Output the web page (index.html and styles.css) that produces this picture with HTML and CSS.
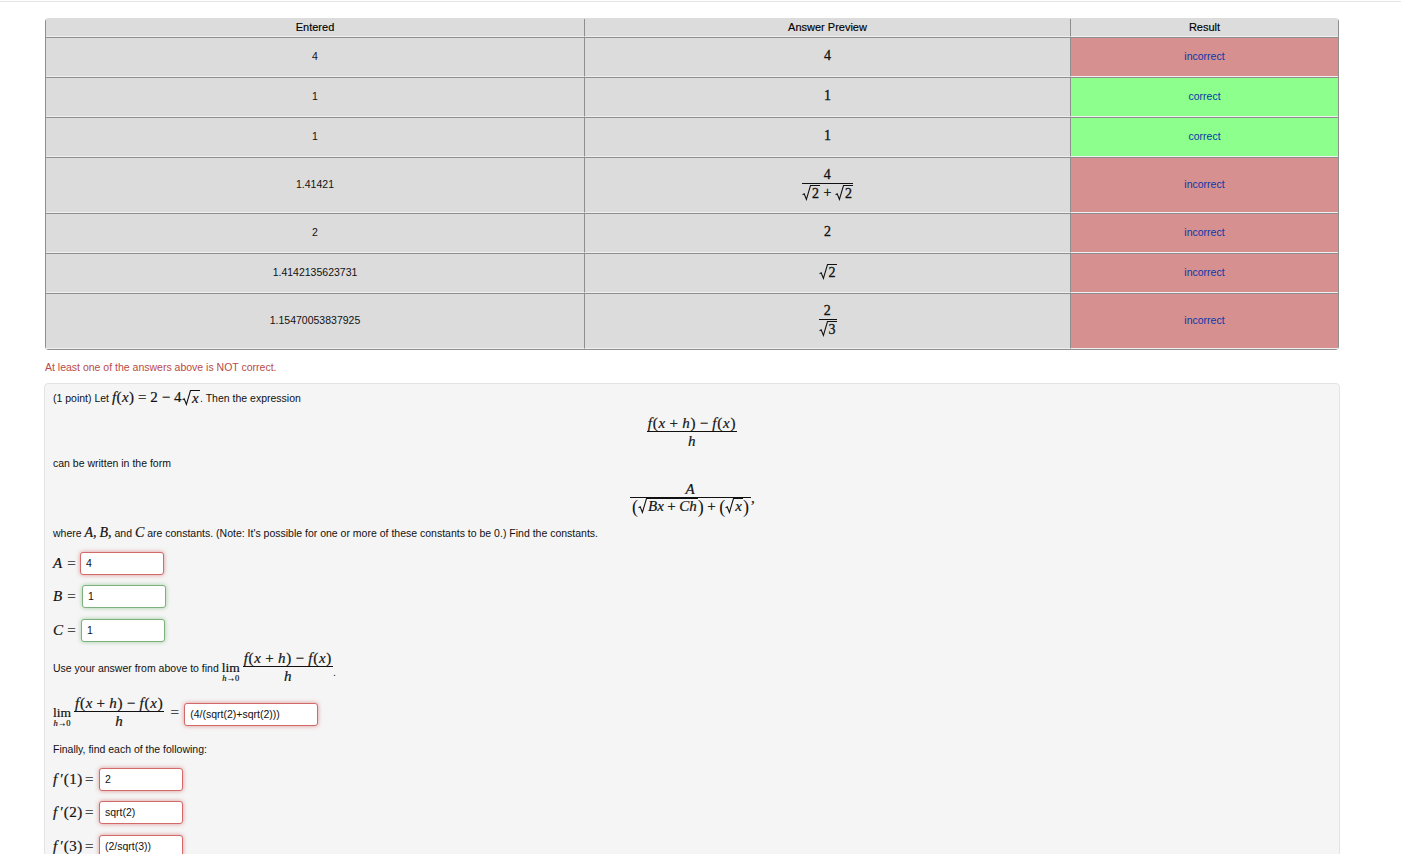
FILE: index.html
```html
<!DOCTYPE html>
<html lang="en">
<head>
<meta charset="utf-8">
<title>Problem answers</title>
<link rel="stylesheet" href="styles.css">
</head>
<body>
<svg class="defs" width="0" height="0" aria-hidden="true"><defs>
<symbol id="radical" viewBox="0 0 9 16" preserveAspectRatio="none"><path d="M0.6 9.8 L2.2 8.8 L4.4 14.4 L8.5 0.5 L9 0.5" fill="none" stroke="#111" stroke-width="1.1" vector-effect="non-scaling-stroke"/></symbol>
</defs></svg>
<div class="topline"></div>
<main class="page">
  <table class="results">
    <colgroup><col class="c1"><col class="c2"><col class="c3"></colgroup>
    <thead><tr><th>Entered</th><th>Answer Preview</th><th>Result</th></tr></thead>
    <tbody>
      <tr><td>4</td><td><span class="m b">4</span></td><td class="bad"><a href="#">incorrect</a></td></tr>
      <tr><td>1</td><td><span class="m b">1</span></td><td class="good"><a href="#">correct</a></td></tr>
      <tr><td>1</td><td><span class="m b">1</span></td><td class="good"><a href="#">correct</a></td></tr>
      <tr class="tall"><td>1.41421</td><td><span class="m b frac"><span class="num">4</span><span class="den"><span class="rad"><svg class="rs"><use href="#radical"/></svg><span class="rb">2</span></span><span class="op">+</span><span class="rad"><svg class="rs"><use href="#radical"/></svg><span class="rb">2</span></span></span></span></td><td class="bad"><a href="#">incorrect</a></td></tr>
      <tr><td>2</td><td><span class="m b">2</span></td><td class="bad"><a href="#">incorrect</a></td></tr>
      <tr><td>1.4142135623731</td><td><span class="m b"><span class="rad"><svg class="rs"><use href="#radical"/></svg><span class="rb">2</span></span></span></td><td class="bad"><a href="#">incorrect</a></td></tr>
      <tr class="tall"><td>1.15470053837925</td><td><span class="m b frac"><span class="num">2</span><span class="den"><span class="rad"><svg class="rs"><use href="#radical"/></svg><span class="rb">3</span></span></span></span></td><td class="bad"><a href="#">incorrect</a></td></tr>
    </tbody>
  </table>
  <p class="warning">At least one of the answers above is NOT correct.</p>
  <section class="problem">
    <div class="line">(1 point) Let <span class="m"><i>f</i>(<i>x</i>)<span class="op">=</span>2<span class="op">−</span>4<span class="rad"><svg class="rs"><use href="#radical"/></svg><span class="rb"><i>x</i></span></span></span>. Then the expression</div>
    <div class="display d1"><span class="m frac"><span class="num"><i>f</i>(<i>x</i><span class="op">+</span><i>h</i>)<span class="op">−</span><i>f</i>(<i>x</i>)</span><span class="den"><i>h</i></span></span></div>
    <div class="line l2">can be written in the form</div>
    <div class="display d2"><span class="m frac"><span class="num"><i>A</i></span><span class="den den-wide"><span class="bp">(</span><span class="rad"><svg class="rs"><use href="#radical"/></svg><span class="rb"><i>Bx</i><span class="op">+</span><i>Ch</i></span></span><span class="bp">)</span><span class="op">+</span><span class="bp">(</span><span class="rad"><svg class="rs"><use href="#radical"/></svg><span class="rb"><i>x</i></span></span><span class="bp">)</span></span></span><span class="m comma">,</span></div>
    <div class="line l3">where <span class="m sm"><i>A</i>,</span> <span class="m sm"><i>B</i>,</span> and <span class="m sm"><i>C</i></span> are constants. (Note: It's possible for one or more of these constants to be 0.) Find the constants.</div>
    <div class="answer"><span class="m label la"><i>A</i><span class="eq">=</span></span><input class="field w-s wrong" value="4"></div>
    <div class="answer"><span class="m label lb"><i>B</i><span class="eq">=</span></span><input class="field w-s right" value="1"></div>
    <div class="answer a-wide"><span class="m label lc"><i>C</i><span class="eq">=</span></span><input class="field w-s right" value="1"></div>
    <div class="rowline r1">Use your answer from above to find&nbsp;<span class="m lim"><span>lim</span><small><i>h</i>→0</small></span><span class="m frac fr-sp"><span class="num"><i>f</i>(<i>x</i><span class="op">+</span><i>h</i>)<span class="op">−</span><i>f</i>(<i>x</i>)</span><span class="den"><i>h</i></span></span><span class="dot">.</span></div>
    <div class="rowline r2"><span class="m lim"><span>lim</span><small><i>h</i>→0</small></span><span class="m frac fr-sp"><span class="num"><i>f</i>(<i>x</i><span class="op">+</span><i>h</i>)<span class="op">−</span><i>f</i>(<i>x</i>)</span><span class="den"><i>h</i></span></span><span class="m eq eq-lim">=</span><input class="field w-l wrong" value="(4/(sqrt(2)+sqrt(2)))"></div>
    <div class="line l4">Finally, find each of the following:</div>
    <div class="answer"><span class="m label lf"><i>f</i>′(1)<span class="eq">=</span></span><input class="field w-s wrong" value="2"></div>
    <div class="answer"><span class="m label lf"><i>f</i>′(2)<span class="eq">=</span></span><input class="field w-s wrong" value="sqrt(2)"></div>
    <div class="answer a-wide"><span class="m label lf"><i>f</i>′(3)<span class="eq">=</span></span><input class="field w-s wrong" value="(2/sqrt(3))"></div>
  </section>
</main>
</body>
</html>
```

FILE: styles.css
```css
html, body { margin: 0; padding: 0; height: 854px; overflow: hidden; background: #fff; }
body { font: 10.5px/18px "Liberation Sans", Arial, sans-serif; color: #111; }
.defs { position: absolute; }
.topline { height: 1px; margin-top: 1px; background: #e4e4e4; }
.page { padding: 16px 61px 0 44px; }

.results {
  width: 1294px; margin-left: 1px; table-layout: fixed;
  border-collapse: separate; border-spacing: 0;
  border: 1px solid #8e8e8e; border-top-color: #dcdcdc; border-radius: 4px;
  background: #dcdcdc;
}
.c1 { width: 538px; } .c2 { width: 486px; } .c3 { width: 268px; }
.results th { height: 16px; line-height: 14px; padding: 0 0 1px; font-weight: normal; font-size: 11px; background: #dcdcdc; color: #000; text-align: center; vertical-align: middle; border-bottom: 1px solid #f0f0f0; -webkit-text-stroke: 0.15px #000; }
.results th + th, .results td + td { border-left: 1px solid #8e8e8e; }
.results td { height: 36px; padding: 0 0 2px; text-align: center; vertical-align: middle; background: #dcdcdc; border-top: 1px solid #8e8e8e; border-bottom: 1px solid #f0f0f0; }
.results .tall td { height: 52px; }
.results td.bad { background: #d69090; }
.results td.good { background: #8cff8c; }
.results a { color: #0a36a8; text-decoration: none; }

.warning { margin: 8px 0 7px 1px; color: #b94a48; line-height: 18px; }
.problem {
  width: 1278px; height: 500px; padding: 5px 8px 0;
  background: #f5f5f5; border: 1px solid #e3e3e3; border-radius: 4px;
}
.line { height: 18px; white-space: nowrap; }
.l2 { margin-top: 6px; } .l3 { margin-top: 5px; } .l4 { margin-top: 12px; }
.display { display: flex; justify-content: center; align-items: center; }
.d1 { height: 33px; margin-top: 8px; }
.d2 { height: 39px; margin-top: 8px; }

.m { font-family: "Liberation Serif", "Times New Roman", serif; font-size: 15px; letter-spacing: .4px; line-height: 14px; color: #111; -webkit-text-stroke: 0.2px #111; }
.sm { font-size: 14px; letter-spacing: 0; }
.b { font-size: 14px; letter-spacing: 0; -webkit-text-stroke: 0.3px #111; }
.m i { font-style: italic; }
.op { margin: 0 3.5px; }
.frac { display: inline-flex; flex-direction: column; align-items: stretch; vertical-align: middle; line-height: 16px; text-align: center; }
.num { display: block; padding: 0 1px; border-bottom: 1px solid #111; white-space: nowrap; letter-spacing: .75px; }
.den { display: flex; justify-content: center; align-items: flex-end; padding-top: 1px; white-space: nowrap; }
.den-wide { padding: 0 2px; align-items: flex-start; height: 20px; letter-spacing: 0; }
.rad { display: inline-flex; align-items: stretch; vertical-align: -4px; line-height: 14px; }
.rs { width: 9px; height: 16px; flex: none; }
.rb { display: inline-block; border-top: 1px solid #111; padding: 0 1px; height: 15px; line-height: 15px; white-space: nowrap; }
.bp { font-size: 18px; line-height: 18px; -webkit-text-stroke: 0; }
.comma { align-self: flex-end; margin: 0 0 14px 0; width: 3px; }

.answer { display: flex; align-items: center; height: 23px; margin-top: 10px; }
.a-wide { margin-top: 11px; }
.label { display: inline-flex; align-items: center; justify-content: space-between; margin-top: -2px; white-space: nowrap; }
.la { width: 23px; margin-right: 4px; }
.lb { width: 23px; margin-right: 6px; }
.lc { width: 23px; margin-right: 5px; }
.lf { width: 41px; margin-right: 5px; }
.eq { color: #333; }
.field {
  box-sizing: border-box; height: 23px; padding: 0 5px 2px; margin: 0;
  font: 10.5px "Liberation Sans", Arial, sans-serif; color: #111;
  background: #fff; border: 1px solid #ccc; border-radius: 3px; outline: 0;
}
.w-s { width: 84px; }
.w-l { width: 134px; margin-top: 6px; }
.wrong { border-color: #d26a6a; box-shadow: 0 0 4px rgba(200, 70, 70, .55); }
.right { border-color: #7db07d; box-shadow: 0 0 4px rgba(90, 170, 90, .55); }

.rowline { display: flex; align-items: center; white-space: nowrap; }
.r1 { height: 33px; margin-top: 9px; }
.r1 .frac { margin-top: -2px; }
.r2 { height: 33px; margin-top: 11px; }
.lim { display: inline-flex; flex-direction: column; align-items: center; padding-top: 9px; font-size: 13.5px; letter-spacing: 0; line-height: 13px; }
.r2 .lim { padding-top: 11px; }
.lim small { font-size: 8.5px; line-height: 9px; letter-spacing: 0; }
.fr-sp { margin-left: 3px; }
.eq-lim { margin: 0 5px 0 6px; }
.dot { margin-top: 8px; }
```
